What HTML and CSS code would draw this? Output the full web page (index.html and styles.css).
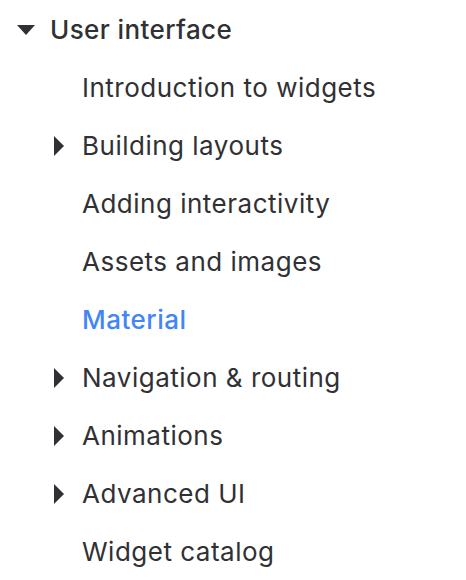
FILE: index.html
```html
<!DOCTYPE html>
<html lang="en">
<head>
    <meta charset="UTF-8">
    <meta name="viewport" content="width=device-width, initial-scale=1.0">
    <title>User interface</title>
    <link rel="stylesheet" href="styles.css">
</head>
<body>
    <nav class="toc">
        <div class="row top">
            <svg class="caret down" width="18" height="10" viewBox="0 0 18 10"><path d="M0 0h18L9 10z"/></svg>
            <span class="label">User interface</span>
        </div>
        <ul class="children">
            <li class="row"><span class="slot"></span><span class="label">Introduction to widgets</span></li>
            <li class="row"><span class="slot"><svg class="caret" width="10" height="20" viewBox="0 0 10 20"><path d="M0 0l10 10L0 20z"/></svg></span><span class="label">Building layouts</span></li>
            <li class="row"><span class="slot"></span><span class="label">Adding interactivity</span></li>
            <li class="row"><span class="slot"></span><span class="label">Assets and images</span></li>
            <li class="row active"><span class="slot"></span><span class="label">Material</span></li>
            <li class="row"><span class="slot"><svg class="caret" width="10" height="20" viewBox="0 0 10 20"><path d="M0 0l10 10L0 20z"/></svg></span><span class="label">Navigation &amp; routing</span></li>
            <li class="row"><span class="slot"><svg class="caret" width="10" height="20" viewBox="0 0 10 20"><path d="M0 0l10 10L0 20z"/></svg></span><span class="label">Animations</span></li>
            <li class="row"><span class="slot"><svg class="caret" width="10" height="20" viewBox="0 0 10 20"><path d="M0 0l10 10L0 20z"/></svg></span><span class="label">Advanced UI</span></li>
            <li class="row"><span class="slot"></span><span class="label">Widget catalog</span></li>
        </ul>
    </nav>
</body>
</html>
```

FILE: styles.css
```css
body {
    margin: 0;
    background-color: #fff;
    font-family: Inter, Roboto, sans-serif;
    color: #303134;
}
.toc {
    padding-top: 1px;
}
.row {
    display: flex;
    align-items: center;
    height: 58px;
    font-size: 26px;
    line-height: 1;
    letter-spacing: 0.5px;
}
.top {
    padding-left: 17px;
    font-weight: 500;
    letter-spacing: 0.4px;
}
.top .caret {
    margin-right: 15px;
}
.caret path {
    fill: #303134;
}
.children {
    list-style: none;
    margin: 0;
    padding: 0 0 0 54px;
}
.slot {
    display: flex;
    align-items: center;
    width: 28px;
    flex-shrink: 0;
}
.active .label {
    color: #4285f4;
    font-weight: 500;
}
```
